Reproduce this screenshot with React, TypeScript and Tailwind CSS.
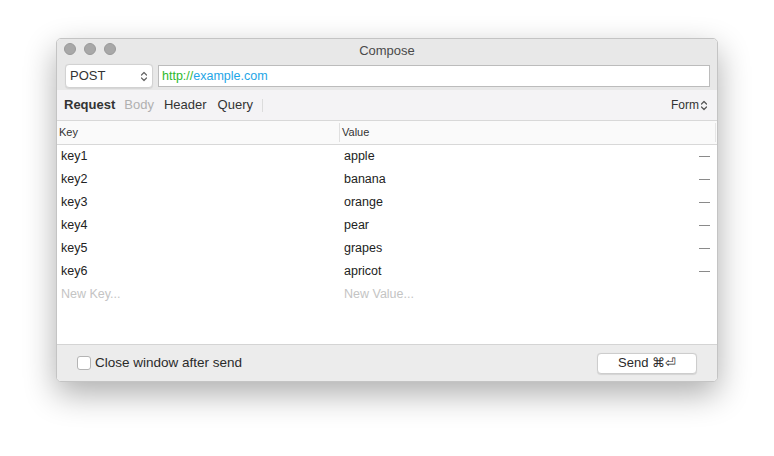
import type { FC } from 'react';

const rows = [
  { key: 'key1', value: 'apple' },
  { key: 'key2', value: 'banana' },
  { key: 'key3', value: 'orange' },
  { key: 'key4', value: 'pear' },
  { key: 'key5', value: 'grapes' },
  { key: 'key6', value: 'apricot' },
];

const Chevrons: FC<{ className?: string }> = ({ className }) => (
  <svg width="8" height="11" viewBox="0 0 8 11" className={className} fill="none" stroke="currentColor" strokeWidth="1.2" strokeLinecap="round" strokeLinejoin="round">
    <path d="M1.5 4 L4 1.5 L6.5 4" />
    <path d="M1.5 7 L4 9.5 L6.5 7" />
  </svg>
);

const App: FC = () => {
  return (
    <div className="w-[774px] h-[456px] bg-white pt-[38px] pl-[56px] font-['Liberation_Sans',Arial,sans-serif]">
      <div className="w-[662px] h-[344px] rounded-[5px] border border-[#c4c4c4] bg-white overflow-hidden flex flex-col shadow-[0_12px_32px_rgba(0,0,0,0.32)]">
        {/* title + toolbar */}
        <div className="bg-[#e8e8e8] h-[51px] flex flex-col shrink-0">
          <div className="h-[22px] relative flex items-center justify-center">
            <div className="absolute left-[7px] top-[4px] flex gap-[8px]">
              <span className="w-[12px] h-[12px] rounded-full bg-[#a8a8a8] border border-[#999]" />
              <span className="w-[12px] h-[12px] rounded-full bg-[#a8a8a8] border border-[#999]" />
              <span className="w-[12px] h-[12px] rounded-full bg-[#a8a8a8] border border-[#999]" />
            </div>
            <span className="text-[13px] text-[#4a4a4a] pt-[1px]">Compose</span>
          </div>
          <div className="flex items-center pl-[8px] pr-[7px] gap-[5px] mt-[3px]">
            <div className="w-[88px] h-[24px] rounded-[4px] bg-white border border-[#d2d2d2] flex items-center justify-between pl-[4px] pr-[4px] shadow-[0_0.5px_1px_rgba(0,0,0,0.08)]">
              <span className="text-[13px] text-[#333]">POST</span>
              <Chevrons className="text-[#666]" />
            </div>
            <div className="flex-1 h-[22px] bg-white border border-[#bcbcbc] flex items-center pl-[3px] text-[12.5px]">
              <span className="text-[#2db92d]">http://</span>
              <span className="text-[#1ea5e6]">example.com</span>
            </div>
          </div>
        </div>
        {/* tabs */}
        <div className="h-[31px] bg-[#f4f3f5] border-b border-[#d8d8d8] flex items-center pl-[7px] pr-[9px] text-[13px] shrink-0">
          <span className="font-bold text-[#333] mr-[9px]">Request</span>
          <span className="text-[#b0b0b0] mr-[10px]">Body</span>
          <span className="text-[#333] mr-[11px]">Header</span>
          <span className="text-[#333]">Query</span>
          <span className="w-px h-[13px] bg-[#dcdcdc] ml-[9px]" />
          <span className="ml-auto text-[#333] text-[12px]">Form</span>
          <Chevrons className="text-[#555] ml-[1px]" />
        </div>
        {/* header row */}
        <div className="h-[24px] bg-[#fafafa] border-b border-[#d8d8d8] flex items-center text-[11px] text-[#333] shrink-0">
          <div className="w-[282px] pl-[2px]">Key</div>
          <div className="w-px self-stretch my-[2px] bg-[#e0e0e0]" />
          <div className="flex-1 pl-[2px]">Value</div>
          <div className="w-px self-stretch my-[2px] bg-[#e6e6e6] mr-[1px]" />
        </div>
        {/* rows */}
        <div className="flex-1 bg-white">
          {rows.map((r) => (
            <div key={r.key} className="h-[23px] flex items-center text-[12.5px] text-[#222]">
              <div className="w-[283px] pl-[4px]">{r.key}</div>
              <div className="flex-1 pl-[4px]">{r.value}</div>
              <div className="w-[11px] h-px bg-[#8a8a8a] mr-[7px]" />
            </div>
          ))}
          <div className="h-[23px] flex items-center text-[12.5px] text-[#c4c4c4]">
            <div className="w-[283px] pl-[4px]">New Key...</div>
            <div className="flex-1 pl-[4px]">New Value...</div>
          </div>
        </div>
        {/* footer */}
        <div className="h-[37px] bg-[#ececec] border-t border-[#d4d4d4] flex items-center pl-[20px] pr-[20px] shrink-0">
          <span className="w-[14px] h-[14px] rounded-[3px] bg-white border border-[#b4b4b4]" />
          <span className="ml-[4px] text-[13.5px] text-[#2a2a2a]">Close window after send</span>
          <div className="ml-auto w-[100px] h-[21px] rounded-[4px] bg-white border border-[#cdcdcd] flex items-center justify-center text-[13px] text-[#2a2a2a] shadow-[0_0.5px_1px_rgba(0,0,0,0.1)]">
            Send ⌘⏎
          </div>
        </div>
      </div>
    </div>
  );
};

export default App;
